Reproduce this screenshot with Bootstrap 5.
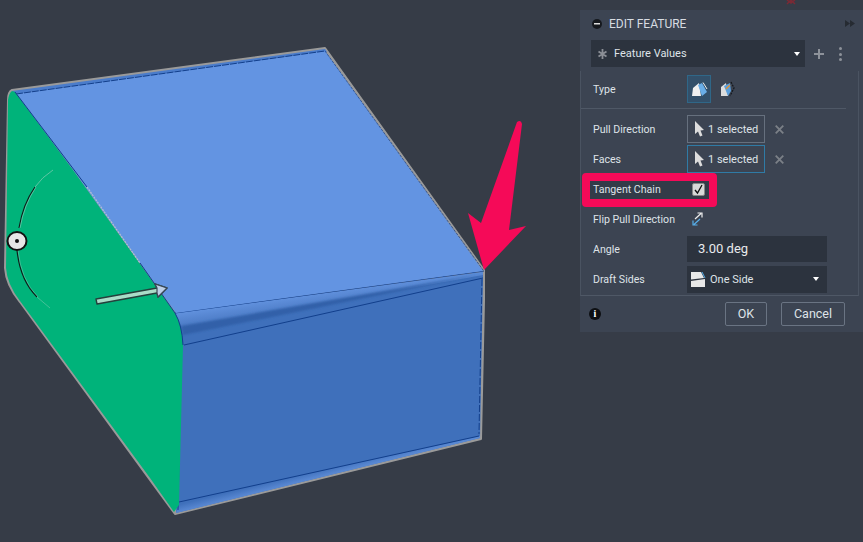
<!DOCTYPE html>
<html lang="en">
<head>
<meta charset="UTF-8">
<title>Edit Feature</title>
<link href="https://cdn.jsdelivr.net/npm/bootstrap@5.3.0/dist/css/bootstrap.min.css" rel="stylesheet">
<style>
html, body { height: 100%; }
body { background: #363c47; margin: 0; overflow: hidden; font-family: Roboto, "Liberation Sans", Arial, sans-serif; }
.stage { position: relative; width: 863px; height: 542px; overflow: hidden; }
.model { position: absolute; left: 0; top: 0; }
.feature-panel { position: absolute; left: 580px; top: 10px; width: 283px; height: 322px; background: #3c4452; color: #dfe3e8; font-size: 11px; }
.panel-title { height: 26px; padding-left: 12px; padding-top: 1px; font-size: 12px; color: #d8dce2; }
.collapse-dot { width: 10px; height: 10px; border-radius: 50%; background: #16191e; margin-right: 7px; }
.panel-title .skip { margin-left: auto; margin-right: 8px; }
.values-row { padding: 4px 0 0 11px; height: 31px; }
.values-box { width: 214px; height: 27px; background: #2c333e; padding: 0 5px 0 7px; gap: 7px; }
.values-text { padding-top: 2px; }
.caret-down { width: 0; height: 0; border-left: 3.5px solid transparent; border-right: 3.5px solid transparent; border-top: 4px solid #fff; margin-left: auto; }
.plus-icon { margin: 9px 0 0 9px; }
.kebab { width: 3px; margin: 7px 0 0 15px; gap: 2.500px; }
.kebab i { display: block; width: 3px; height: 3px; border-radius: 50%; background: #8d929a; }
.panel-body { border-left: 1px solid #4a5361; border-right: 1px solid #4a5361; border-bottom: 1px solid #4f5866; margin-top: 4px; width: 279px; height: 225px; }
.prop-row { padding-left: 12px; height: 30px; position: relative; }
.prop-label { width: 94px; flex: none; position: relative; font-size: 10.6px; padding-top: 2px; }
.type-row { height: 38px; padding-bottom: 1px; border-bottom: 1px solid #4f5866; margin-right: 12px; margin-bottom: 5px; }
.type-btn { width: 24px; height: 28px; border: 1px solid #2f6788; background: #33506a; }
.type-btn-off { width: 24px; height: 28px; margin-left: 4px; }
.sel-box { width: 78px; height: 28px; border: 1px solid #66707e; gap: 3px; padding-left: 6px; color: #dfe3e8; }
.sel-box.active-sel { border-color: #2f7ba6; }
.sel-text { padding-top: 2px; }
.clear-x { margin-left: 10px; }
.tangent-mark { position: absolute; left: 1px; top: -1px; width: 135px; height: 34px; border: 8px solid #f50a58; border-radius: 4px; background: #333b48; }
.tangent-check { width: 13px; height: 13px; background: #d8d8d8; border: 1px solid #888; border-radius: 2px; margin-left: 5px; position: relative; }
.flip-icon { margin-left: 5px; }
.num-box { width: 140px; height: 26px; background: #2c333e; padding-left: 11px; font-size: 13px; color: #e8eaed; }
.side-box { width: 140px; height: 27px; background: #2c333e; padding: 0 8px 0 4px; gap: 4px; }
.panel-foot { padding: 6px 18px 0 9px; }
.foot-btn { height: 24px; border: 1px solid #6a7483; border-radius: 2px; color: #dfe3e8; font-size: 12.5px; }
.foot-ok { width: 42px; margin-left: auto; }
.foot-cancel { width: 64px; margin-left: 14px; }
.info-dot { width: 12px; height: 12px; margin-top: 6px; border-radius: 50%; background: #0d0f12; color: #fff; font-size: 10px; font-weight: bold; line-height: 12px; text-align: center; font-family: "Liberation Serif", serif; }
</style>
</head>
<body>
<div class="stage">
  <svg class="model" width="863" height="542" viewBox="0 0 863 542">
    <defs>
      <linearGradient id="bottomBand" gradientUnits="userSpaceOnUse" x1="325" y1="468" x2="328" y2="480">
        <stop offset="0" stop-color="#3f70bb"/>
        <stop offset="1" stop-color="#6a98e2"/>
      </linearGradient>
      <linearGradient id="creaseTop" gradientUnits="userSpaceOnUse" x1="330" y1="292" x2="332" y2="306">
        <stop offset="0" stop-color="#6090dc"/>
        <stop offset="1" stop-color="#4a79c3"/>
      </linearGradient>
      <filter id="soft" x="-5%" y="-50%" width="110%" height="200%"><feGaussianBlur stdDeviation="1.2"/></filter>
    </defs>
    <!-- silhouette -->
    <path d="M12 90 L325 48 L484 270 L484 300 L481 439 L175 514 L150 480 L20 302 Q6 285 5 268 L8 100 Q8 92 12 90Z" fill="#9a9a9a" stroke="#9a9a9a" stroke-width="2" stroke-linejoin="round"/>
    <!-- side faces -->
    <path d="M182 340 L483 276 L480 438 L176 513Z" fill="#3f70bb"/>
    <path d="M179 502 L480 436 L480 438 L176 513Z" fill="url(#bottomBand)"/>
    <path d="M179 502 L479 436" stroke="#123f8c" stroke-width="1" fill="none"/>
    <path d="M181 345 L178 510" stroke="#123f8c" stroke-width="1" fill="none"/>
    <!-- crease -->
    <path d="M175 313 L483 272 L483 278 L183 345Z" fill="#3f70bb"/>
    <path d="M175 313 L483 272 L483 275 L183 329Z" fill="url(#creaseTop)"/>
    <path d="M181 326 L483 274 L183 335Z" fill="#3060a9" filter="url(#soft)"/>
    <path d="M175 313 L484 271" stroke="#123f8c" stroke-width="1" fill="none"/>
    <path d="M184 345 L483 278" stroke="#123f8c" stroke-width="1" fill="none"/>
    <path d="M482 279 L479 434" stroke="#123f8c" stroke-width="1" stroke-dasharray="7 2" fill="none"/>
    <!-- top face -->
    <path d="M12 91 L325 49 L327 52 L16 94Z" fill="#4a7ccb"/>
    <path d="M16 94 L325 51 L483 271 L176 313 L73 170Z" fill="#6394e2"/>
    <path d="M16 94 L325 51" stroke="#123f8c" stroke-width="1" stroke-dasharray="7 1" fill="none"/>
    <path d="M325 51 L483 270" stroke="#123f8c" stroke-width="1" stroke-dasharray="3 1" fill="none" opacity=".7"/>
    <!-- green face -->
    <path d="M12 91 Q9 93 8 100 L6 268 Q7 284 20 301 L150 478 L174 512 L179 505 L183 345 Q182 325 175 313 L73 170 L15 92Z" fill="#00b37a"/>
    <path d="M15 92 L87 187 M140 263 L175 313 Q182 325 183 345" stroke="#123f8c" stroke-width="1" fill="none"/>
    <path d="M87 187 L140 263" stroke="#b4c0d0" stroke-width="1.2" stroke-dasharray="2 1" fill="none"/>
    <!-- draft handle arc -->
    <path d="M53 170 Q42 177 35 187" stroke="#bcd8cc" stroke-width="1" fill="none" opacity=".5"/>
    <path d="M35 187 Q23 204 19 228" stroke="#0e1e1a" stroke-width="1.2" fill="none"/>
    <path d="M36 187 Q24 205 20 228" stroke="#cfe0da" stroke-width=".7" fill="none" opacity=".6"/>
    <path d="M17 250 Q20 280 37 297" stroke="#0e1e1a" stroke-width="1.2" fill="none"/>
    <path d="M18 250 Q21 280 38 297" stroke="#cfe0da" stroke-width=".6" fill="none" opacity=".5"/>
    <path d="M37 297 L50 308" stroke="#8fcfb8" stroke-width=".8" fill="none" opacity=".6"/>
    <ellipse cx="17" cy="241" rx="9.500" ry="9" fill="#e6e6e6" stroke="#111" stroke-width="2"/>
    <circle cx="17" cy="241" r="2" fill="#111"/>
    <!-- pull arrow -->
    <path d="M96 299 L157 288 L155 284 L167 288 L158 297 L157 293 L97 304Z" fill="#a9dcc8" stroke="#24403c" stroke-width="1.4" stroke-linejoin="round"/>
    <path d="M157 288 L155 284 L167 288 L158 297 L157 293Z" fill="#bccfe6" stroke="#3a4656" stroke-width="1.2" stroke-linejoin="round"/>
    <!-- pink arrow -->
    <path d="M517 122 Q521 119 522 124 L509 230 L526 226 L484 270 L468 213 L481 223Z" fill="#f50a58"/>
    <!-- red mark cut by the top edge -->
    <path d="M787 0 L791 3 L795 0 M791 0 L787 4 M791 0 L795 4" stroke="#7a2a35" stroke-width="1.500" fill="none"/>
  </svg>

  <div class="feature-panel d-flex flex-column">
    <div class="panel-title d-flex align-items-center">
      <span class="collapse-dot d-flex align-items-center justify-content-center">
        <svg width="6" height="2" viewBox="0 0 6 2"><rect width="6" height="1.500" fill="#ddd"/></svg>
      </span>
      <span>EDIT FEATURE</span>
      <svg class="skip" width="10" height="7" viewBox="0 0 10 7"><path d="M0 0 L5 3.500 L0 7Z M5 0 L10 3.500 L5 7Z" fill="#262b32"/></svg>
    </div>
    <div class="values-row d-flex align-items-start">
      <div class="values-box d-flex align-items-center">
        <svg width="9" height="10" viewBox="0 0 9 10"><path d="M4.500 0 V10 M0.500 2.500 L8.500 7.500 M8.500 2.500 L0.500 7.500" stroke="#8b8f96" stroke-width="1.800"/></svg>
        <span class="values-text">Feature Values</span><span class="caret-down"></span>
      </div>
      <svg class="plus-icon" width="10" height="10" viewBox="0 0 10 10"><path d="M5 0 V10 M0 5 H10" stroke="#8d929a" stroke-width="2"/></svg>
      <span class="kebab d-flex flex-column"><i></i><i></i><i></i></span>
    </div>
    <div class="panel-body">
      <div class="prop-row type-row d-flex align-items-center">
        <span class="prop-label">Type</span>
        <span class="type-btn d-flex align-items-center justify-content-center">
          <svg width="17" height="15" viewBox="0 0 17 15"><path d="M1 14 L2 6 L8 1 L10 14Z" fill="#f0f0f0"/><path d="M7 3 L11 1 L16 10 L11 14Z" fill="#6aaee8"/><path d="M12 0.500 L16 7" stroke="#eee" fill="none"/></svg>
        </span>
        <span class="type-btn-off d-flex align-items-center justify-content-center">
          <svg width="15" height="16" viewBox="0 0 15 16"><path d="M1 15 L1 6 L6 2 L8 15Z" fill="#ddd"/><path d="M4 5 L10 2 L11 10 L8 15Z" fill="#5a9fdc"/><path d="M6 8 L10 4" stroke="#e8912d" stroke-width="1.300"/><path d="M11 1 L14 7 L10 15" stroke="#14171b" stroke-width="1.200" stroke-dasharray="2 1" fill="none"/></svg>
        </span>
      </div>
      <div class="prop-row d-flex align-items-center">
        <span class="prop-label">Pull Direction</span>
        <span class="sel-box d-flex align-items-center">
          <svg width="11" height="16" viewBox="0 0 11 16"><path d="M1 0 L10 9 L6.500 9.500 L8.500 14.500 L6 15.500 L4 10.500 L1 13Z" fill="#ddd"/></svg><span class="sel-text">1 selected</span></span>
        <svg class="clear-x" width="9" height="9" viewBox="0 0 9 9"><path d="M0.700 0.700 L8.300 8.300 M8.300 0.700 L0.700 8.300" stroke="#7b8087" stroke-width="1.800"/></svg>
      </div>
      <div class="prop-row d-flex align-items-center">
        <span class="prop-label">Faces</span>
        <span class="sel-box active-sel d-flex align-items-center">
          <svg width="11" height="16" viewBox="0 0 11 16"><path d="M1 0 L10 9 L6.500 9.500 L8.500 14.500 L6 15.500 L4 10.500 L1 13Z" fill="#ddd"/></svg><span class="sel-text">1 selected</span></span>
        <svg class="clear-x" width="9" height="9" viewBox="0 0 9 9"><path d="M0.700 0.700 L8.300 8.300 M8.300 0.700 L0.700 8.300" stroke="#7b8087" stroke-width="1.800"/></svg>
      </div>
      <div class="prop-row d-flex align-items-center">
        <span class="tangent-mark"></span>
        <span class="prop-label">Tangent Chain</span>
        <span class="tangent-check d-flex align-items-center justify-content-center">
          <svg width="11" height="11" viewBox="0 0 11 11"><path d="M2 6 L4.500 9 L9 1" stroke="#111" stroke-width="1.300" fill="none"/></svg>
        </span>
      </div>
      <div class="prop-row d-flex align-items-center">
        <span class="prop-label">Flip Pull Direction</span>
        <svg class="flip-icon" width="11" height="14" viewBox="0 0 11 14"><path d="M3 7 L9 1.500 M5.500 1 L10 1 L10 5.500" stroke="#eee" stroke-width="1.200" fill="none"/><path d="M8 7 L2 12.500 M1 8.500 L1 13 L5.500 13" stroke="#57aee8" stroke-width="1.200" fill="none"/></svg>
      </div>
      <div class="prop-row d-flex align-items-center">
        <span class="prop-label">Angle</span>
        <span class="num-box d-flex align-items-center">3.00 deg</span>
      </div>
      <div class="prop-row d-flex align-items-center">
        <span class="prop-label">Draft Sides</span>
        <span class="side-box d-flex align-items-center">
          <svg width="15" height="15" viewBox="0 0 15 15"><path d="M0 0 L10 0 L13 6 L0 7.500Z" fill="#e8e8e8"/><path d="M0 9 L14 7 L14 15 L0 15Z" fill="#e8e8e8"/><path d="M11 0 L14 6" stroke="#57aee8"/></svg><span class="sel-text">One Side</span><span class="caret-down"></span>
        </span>
      </div>
    </div>
    <div class="panel-foot d-flex align-items-start">
      <span class="info-dot">i</span>
      <span class="foot-btn foot-ok d-flex align-items-center justify-content-center">OK</span>
      <span class="foot-btn foot-cancel d-flex align-items-center justify-content-center">Cancel</span>
    </div>
  </div>
</div>
<script src="https://cdn.jsdelivr.net/npm/bootstrap@5.3.0/dist/js/bootstrap.bundle.min.js"></script>
</body>
</html>
